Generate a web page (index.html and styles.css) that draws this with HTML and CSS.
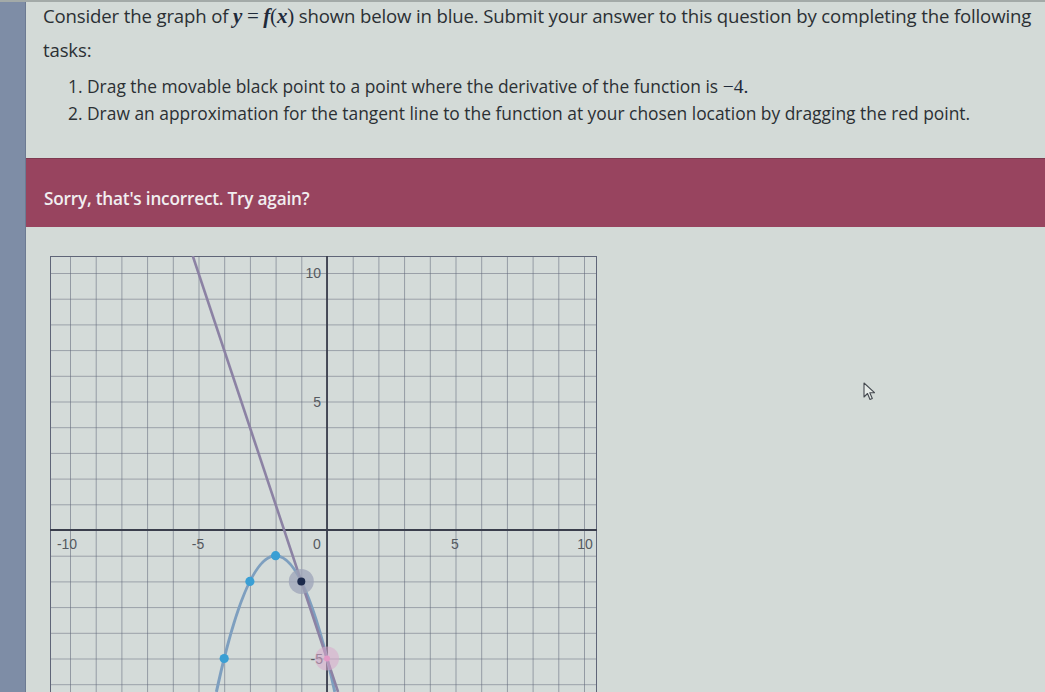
FILE: index.html
```html
<!DOCTYPE html>
<html>
<head>
<meta charset="utf-8">
<link rel="stylesheet" href="styles.css">
</head>
<body>
<div class="screen">
  <aside class="strip"></aside>
  <main class="main">
    <section class="question">
      <p class="intro">Consider the graph of <span class="math">y</span> <span class="op">=</span> <span class="math">f</span><span class="op">(</span><span class="math">x</span><span class="op">)</span> shown below in blue. Submit your answer to this question by completing the following tasks:</p>
      <ol class="tasks">
        <li>Drag the movable black point to a point where the derivative of the function is <span class="num">−4.</span></li>
        <li>Draw an approximation for the tangent line to the function at your chosen location by dragging the red point.</li>
      </ol>
    </section>
    <div class="banner">Sorry, that's incorrect. Try again?</div>
    <div class="graph-area">
      <svg class="graph" width="547" height="436" viewBox="0 0 547 436">
        <defs>
          <pattern id="grid" x="277" y="274" width="25.7" height="25.7" patternUnits="userSpaceOnUse">
            <path d="M0 0 H25.7 M0 0 V25.7" fill="none" stroke="#5f6578" stroke-width="1.1"/>
          </pattern>
        </defs>
        <rect x="0" y="0" width="547" height="436" fill="#d4dbd9"/>
        <rect x="0" y="0" width="547" height="436" fill="url(#grid)"/>
        <rect x="0.5" y="0.5" width="546" height="436" fill="none" stroke="#5f6578" stroke-width="1"/>
        <line x1="0" y1="274" x2="547" y2="274" stroke="#3a3e4c" stroke-width="1.8"/>
        <line x1="277" y1="0" x2="277" y2="436" stroke="#3a3e4c" stroke-width="1.8"/>
        <g class="lbl">
          <text x="271" y="22" text-anchor="end">10</text>
          <text x="271" y="151" text-anchor="end">5</text>
          <text x="273" y="408" text-anchor="end">-5</text>
          <text x="17" y="293" text-anchor="middle">-10</text>
          <text x="148" y="293" text-anchor="middle">-5</text>
          <text x="267" y="293" text-anchor="middle">0</text>
          <text x="405" y="293" text-anchor="middle">5</text>
          <text x="535" y="293" text-anchor="middle">10</text>
        </g>
        <path d="M166.4 435.9 Q225.6 163.5 284.8 435.9" fill="none" stroke="#7e9fbf" stroke-width="3"/>
        <line x1="142.8" y1="0" x2="288.1" y2="436" stroke="#8c82a4" stroke-width="2.6"/>
        <circle cx="174.2" cy="402.5" r="4.6" fill="#3a9fd4"/>
        <circle cx="199.9" cy="325.4" r="4.6" fill="#3a9fd4"/>
        <circle cx="225.6" cy="299.7" r="4.6" fill="#3a9fd4"/>
        <circle cx="251.3" cy="325.4" r="12.5" fill="#9ea4b8" fill-opacity="0.75"/>
        <circle cx="251.3" cy="325.4" r="4" fill="#1c2a4c"/>
        <circle cx="277" cy="402.5" r="12" fill="#d9a9cc" fill-opacity="0.55"/>
        <circle cx="277" cy="402.5" r="3" fill="#e39ac6"/>
      </svg>
    </div>
    <svg class="cursor" width="14" height="20" viewBox="0 0 14 20">
      <path d="M1 1 L1 15 L4.5 11.5 L7 17.5 L9.3 16.5 L6.8 10.7 L11.5 10.7 Z" fill="#e6ebe8" stroke="#454a50" stroke-width="1.1" stroke-linejoin="round"/>
    </svg>
  </main>
</div>
</body>
</html>
```

FILE: styles.css
```css
html, body {
  margin: 0;
  padding: 0;
  height: 100%;
  overflow: hidden;
  background: #d3dad7;
}
.screen {
  display: flex;
  height: 692px;
  border-top: 2px solid #a3aaa8;
  box-sizing: border-box;
}
.strip {
  width: 26px;
  flex: none;
  background: #7e8da6;
  border-right: 1px solid #6c7a92;
  box-sizing: border-box;
}
.main {
  flex: 1;
  position: relative;
  font-family: "Open Sans", "Liberation Sans", sans-serif;
  color: #2b3034;
}
.question {
  padding: 0 8px 0 17px;
}
.intro {
  margin: -3px 0 0 0;
  font-size: 18.6px;
  line-height: 33px;
  letter-spacing: -0.15px;
}
.math {
  font-family: "Liberation Serif", "DejaVu Serif", serif;
  font-style: italic;
  font-weight: bold;
  font-size: 21px;
  color: #1f2a3a;
}
.op {
  font-family: "Liberation Serif", "DejaVu Serif", serif;
  font-size: 21px;
  color: #1f2a3a;
}
.num {
  font-family: "Liberation Serif", "DejaVu Serif", serif;
  font-size: 19.5px;
  color: #1f2a3a;
}
.tasks {
  margin: 7px 0 0 0;
  padding-left: 44px;
  font-size: 17.4px;
  line-height: 26px;
}
.banner {
  margin-top: 32px;
  height: 69px;
  box-sizing: border-box;
  padding: 29px 0 0 18px;
  background: #98445f;
  border-top: 1px solid #7e3a50;
  color: #f1eef0;
  font-size: 17.2px;
  font-weight: 600;
  line-height: 22px;
  letter-spacing: -0.2px;
}
.graph-area {
  padding: 29px 0 0 24px;
}
.graph {
  display: block;
}
.lbl text {
  font-family: "Liberation Sans", Arial, sans-serif;
  font-size: 14px;
  fill: #55595f;
}
.cursor {
  position: absolute;
  left: 837px;
  top: 380px;
}
```
